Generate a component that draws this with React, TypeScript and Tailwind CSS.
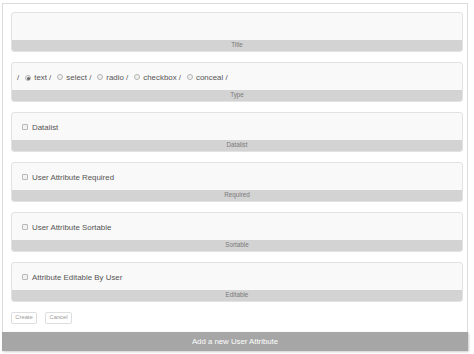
import React from "react";

const font = { fontFamily: '"Liberation Sans", Arial, sans-serif' };

function Box() {
  return <span className="inline-block w-[6px] h-[6px] border border-[#b8b8b8] bg-[#f2f2f2] rounded-[1px] shrink-0" />;
}

function Radio({ checked }: { checked?: boolean }) {
  return (
    <span className="inline-flex items-center justify-center w-[6px] h-[6px] rounded-full border border-[#b5b5b5] bg-[#f0f0f0] shrink-0">
      {checked && <span className="w-[3px] h-[3px] rounded-full bg-[#666]" />}
    </span>
  );
}

function Panel({ label, children }: { label: string; children?: React.ReactNode }) {
  return (
    <div className="h-[40px] flex flex-col border border-[#e2e2e2] rounded-[3px] overflow-hidden bg-[#f9f9f9]">
      <div className="flex-1 flex items-center pl-[10px] pt-[2px] text-[7.9px] text-[#555]">{children}</div>
      <div className="h-[11px] bg-[#d3d3d3] flex items-center justify-center text-[6.3px] text-[#7a7a7a] leading-none">
        {label}
      </div>
    </div>
  );
}

export default function App() {
  const types = ["text", "select", "radio", "checkbox", "conceal"];
  return (
    <div className="w-[474px] h-[354px] bg-white" style={font}>
      <div className="ml-[2px] mt-[3px] w-[466px] border border-[#dcdcdc] border-b-0">
        <div className="pl-[8px] pr-[4px] pt-[8px] flex flex-col gap-[10px]">
          <Panel label="Title" />
          <Panel label="Type">
            <div className="flex items-center gap-[3px] -ml-[5px]">
              <span>/</span>
              {types.map((t, i) => (
                <span key={t} className="flex items-center gap-[3px]">
                  <span className="ml-[3px]"><Radio checked={i === 0} /></span>
                  <span>{t} /</span>
                </span>
              ))}
            </div>
          </Panel>
          <Panel label="Datalist">
            <div className="flex items-center gap-[4px]"><Box /><span>Datalist</span></div>
          </Panel>
          <Panel label="Required">
            <div className="flex items-center gap-[4px]"><Box /><span>User Attribute Required</span></div>
          </Panel>
          <Panel label="Sortable">
            <div className="flex items-center gap-[4px]"><Box /><span>User Attribute Sortable</span></div>
          </Panel>
          <Panel label="Editable">
            <div className="flex items-center gap-[4px]"><Box /><span>Attribute Editable By User</span></div>
          </Panel>
          <div className="flex gap-[8px] mb-[8px]">
            <button className="h-[12px] w-[26px] border border-[#dedede] rounded-[2px] bg-white text-[5.8px] text-[#999] leading-none">Create</button>
            <button className="h-[12px] w-[27px] border border-[#dedede] rounded-[2px] bg-white text-[5.8px] text-[#999] leading-none">Cancel</button>
          </div>
        </div>
        <div className="h-[19px] bg-[#a6a6a6] -mx-[1px] flex items-center justify-center text-white text-[7.8px] shadow-[1px_1px_2px_rgba(0,0,0,0.2)]">
          Add a new User Attribute
        </div>
      </div>
    </div>
  );
}
